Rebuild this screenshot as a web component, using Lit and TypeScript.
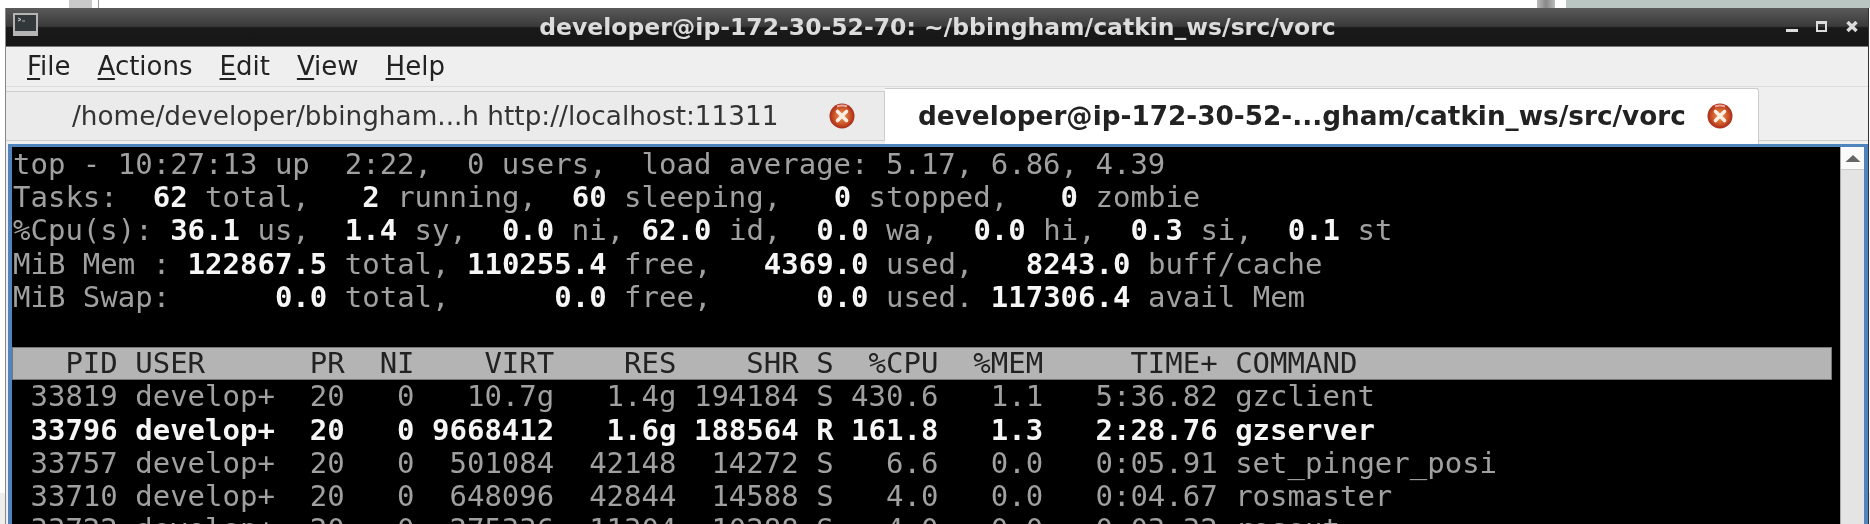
import { LitElement, html, css } from "lit";
import { customElement } from "lit/decorators.js";

const SUMMARY = [
  "top - 10:27:13 up  2:22,  0 users,  load average: 5.17, 6.86, 4.39",
  "Tasks: * 62 *total, *  2 *running, * 60 *sleeping, *  0 *stopped, *  0 *zombie",
  "%Cpu(s): *36.1 *us, * 1.4 *sy, * 0.0 *ni, *62.0 *id, * 0.0 *wa, * 0.0 *hi, * 0.3 *si, * 0.1 *st",
  "MiB Mem : *122867.5 *total, *110255.4 *free, *  4369.0 *used, *  8243.0 *buff/cache",
  "MiB Swap: *     0.0 *total, *     0.0 *free, *     0.0 *used. *117306.4 *avail Mem",
  " ",
];
const HEADER = "   PID USER      PR  NI    VIRT    RES    SHR S  %CPU  %MEM     TIME+ COMMAND";
const ROWS = [
  " 33819 develop+  20   0   10.7g   1.4g 194184 S 430.6   1.1   5:36.82 gzclient",
  "* 33796 develop+  20   0 9668412   1.6g 188564 R 161.8   1.3   2:28.76 gzserver*",
  " 33757 develop+  20   0  501084  42148  14272 S   6.6   0.0   0:05.91 set_pinger_posi",
  " 33710 develop+  20   0  648096  42844  14588 S   4.0   0.0   0:04.67 rosmaster",
  " 33722 develop+  20   0  275336  11304  10288 S   4.0   0.0   0:03.32 rosout",
];

@customElement("app-root")
export class AppRoot extends LitElement {
  static styles = css`
    :host { display: block; width: 1870px; height: 524px; overflow: hidden; background: linear-gradient(#fff 493px, #eee 493px); }
    .strip { display: flex; height: 8px; background: #fff; }
    .strip .a { width: 69px; }
    .strip .b { width: 23px; background: #c9c9c9; }
    .strip .c { width: 6px; }
    .strip .d { width: 1px; background: #999; }
    .strip .e { flex: 1; }
    .strip .f { width: 18px; background: linear-gradient(90deg, #bbb, #888 50%, #bbb); }
    .strip .g { width: 11px; }
    .strip .h { width: 304px; background: #bac6c2; }
    .win { margin-left: 5px; margin-right: 1px; height: 516px; display: flex; flex-direction: column; background: #efefef; border-left: 1px solid #888; border-right: 1px solid #333; filter: blur(0.45px); }
    .title { height: 39px; flex: none; display: grid; grid-template-columns: 1fr auto 1fr; align-items: center; padding: 0 10px 0 7px; color: #dcdcdc; font: bold 23.5px "DejaVu Sans", sans-serif; background: linear-gradient(#5a5a5a, #3a3a3a 48%, #1a1a1a 52%, #161616); border-bottom: 1px solid #777; box-sizing: border-box; }
    .title .txt { white-space: pre; padding-left: 4px; }
    .ticon { align-self: start; margin-top: 5px; }
    .ctl { display: flex; gap: 18px; align-items: center; justify-content: flex-end; }
    .menu { height: 39px; flex: none; display: flex; align-items: flex-start; gap: 27px; padding: 4px 0 0 21px; box-sizing: border-box; font: 26px/30px "DejaVu Sans", sans-serif; color: #222; background: #efefef; }
    .menu u { text-underline-offset: 3px; }
    .tabs { height: 58px; flex: none; display: flex; background: #efefef; border-top: 1px solid #ddd; box-sizing: border-box; }
    .tab { display: flex; align-items: center; justify-content: space-between; box-sizing: border-box; font: 26.3px "DejaVu Sans", sans-serif; color: #333; white-space: pre; }
    .tab.off { width: 879px; margin: 4px 0 3px; padding: 0 29px 0 66px; background: #ebebeb; border: solid #ccc; border-width: 1px 1px 1px 0; }
    .tab.on { width: 874px; margin-top: 1px; padding: 0 25px 2px 33px; background: #fff; font-weight: bold; color: #222; border-right: 1px solid #ccc; border-top: 1px solid #ccc; border-top-right-radius: 3px; }
    .filler { flex: 1; margin: 4px 0 3px; border-bottom: 1px solid #ccc; }
    .body { flex: 1; min-height: 0; margin-left: 2px; display: flex; border: solid #4f84bd; border-width: 3px 4px 0 4px; background: #000; }
    .term { flex: 1; min-width: 0; overflow: hidden; background: #000; padding-top: 1px; font: 29px/33.2px "DejaVu Sans Mono", monospace; color: #a0a0a0; }
    .line { white-space: pre; height: 33.2px; padding-left: 1px; }
    .line b { color: #f6f6f6; font-weight: bold; }
    .line.head { background: #b4b4b4; color: #222; margin-right: 8px; box-shadow: inset 0 0 0 1px #777; }
    .sb { width: 24px; flex: none; background: #e4e4e4; box-sizing: border-box; border-left: 1px solid #aaa; }
    .sbtn { height: 23px; background: #fafafa; border-bottom: 1px solid #ccc; display: flex; justify-content: center; padding-top: 8px; box-sizing: border-box; }
  `;

  private seg(s: string) {
    return s.split("*").map((p, i) => (i % 2 ? html`<b>${p}</b>` : p));
  }

  private closeIcon(c: string) {
    return html`<svg width="26" height="26" viewBox="0 0 26 26">
      <defs><radialGradient id="g${c}" cx="50%" cy="50%" r="55%"><stop offset="0" stop-color="#ea9a50"/><stop offset="0.55" stop-color="#cf5a2a"/><stop offset="1" stop-color="#a01e14"/></radialGradient></defs>
      <circle cx="13" cy="13" r="12.5" fill="url(#g${c})"/>
      <path d="M8 3.5a9 5 0 0 1 10 0" fill="none" stroke="#e9a79a" stroke-width="2"/>
      <path d="M8.5 8.5 17.5 17.5M17.5 8.5 8.5 17.5" stroke="#fbeee2" stroke-width="3.6" stroke-linecap="round"/>
    </svg>`;
  }

  render() {
    return html`
      <div class="strip"><i class="a"></i><i class="b"></i><i class="c"></i><i class="d"></i><i class="e"></i><i class="f"></i><i class="g"></i><i class="h"></i></div>
      <div class="win">
        <div class="title">
          <svg class="ticon" width="25" height="23" viewBox="0 0 25 23"><rect width="25" height="23" fill="#b4b4b4"/><rect x="2" y="2" width="21" height="16" fill="#33383a"/><path d="M5 5l3 1.5-3 1.5" fill="none" stroke="#ddd" stroke-width="1"/><path d="M9 8h3" stroke="#aaa"/></svg>
          <span class="txt">developer@ip-172-30-52-70: ~/bbingham/catkin_ws/src/vorc</span>
          <span class="ctl">
            <svg width="12" height="12" viewBox="0 0 12 12"><rect x="0" y="8" width="12" height="3" fill="#ddd"/></svg>
            <svg width="12" height="12" viewBox="0 0 12 12"><path d="M0 0h11v11H0ZM2 3v6h7V3Z" fill="#ddd" fill-rule="evenodd"/></svg>
            <svg width="12" height="12" viewBox="0 0 12 12"><path d="M1.5 1 10.5 10M10.5 1 1.5 10" stroke="#ddd" stroke-width="3.4"/></svg>
          </span>
        </div>
        <div class="menu">
          <span><u>F</u>ile</span><span><u>A</u>ctions</span><span><u>E</u>dit</span><span><u>V</u>iew</span><span><u>H</u>elp</span>
        </div>
        <div class="tabs">
          <div class="tab off"><span>/home/developer/bbingham...h http://localhost:11311</span>${this.closeIcon("a")}</div>
          <div class="tab on"><span>developer@ip-172-30-52-...gham/catkin_ws/src/vorc</span>${this.closeIcon("b")}</div>
          <div class="filler"></div>
        </div>
        <div class="body">
          <div class="term">
            ${SUMMARY.map((l) => html`<div class="line">${this.seg(l)}</div>`)}
            <div class="line head">${HEADER}</div>
            ${ROWS.map((l) => html`<div class="line">${this.seg(l)}</div>`)}
          </div>
          <div class="sb"><div class="sbtn"><svg width="16" height="7" viewBox="0 0 16 7"><path d="M8 0 15.5 7H.5Z" fill="#666"/></svg></div></div>
        </div>
      </div>
    `;
  }
}
